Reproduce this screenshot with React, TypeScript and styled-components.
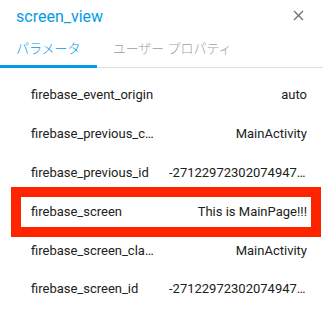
import React from "react";
import styled, { createGlobalStyle } from "styled-components";

const Global = createGlobalStyle`
  html, body { margin: 0; padding: 0; background: #ffffff; }
  body { font-family: Roboto, "Noto Sans CJK JP", sans-serif; -webkit-font-smoothing: antialiased; }
`;

const Panel = styled.div`
  width: 323px;
  height: 324px;
  background: #ffffff;
  overflow: hidden;
  display: flex;
  flex-direction: column;
`;

const Header = styled.div`
  display: flex;
  align-items: center;
  justify-content: space-between;
  height: 34px;
  padding: 0 16px 0 16px;
  box-sizing: border-box;
`;

const Title = styled.div`
  font-family: Roboto, sans-serif;
  font-size: 16px;
  color: #039be5;
  line-height: 34px;
`;

const CloseButton = styled.button`
  border: 0;
  background: none;
  padding: 0;
  width: 17px;
  height: 17px;
  display: flex;
  align-items: center;
  justify-content: center;
  color: #757575;
  cursor: pointer;
  margin-top: -4px;
`;

const Tabs = styled.div`
  display: flex;
  border-bottom: 1px solid #e0e0e0;
  height: 33px;
`;

const Tab = styled.div<{ $active?: boolean }>`
  box-sizing: border-box;
  height: 34px;
  margin-bottom: -1px;
  padding: 0 16px 5px 16px;
  display: flex;
  align-items: center;
  font-family: Roboto, "Noto Sans CJK JP", sans-serif;
  font-size: 13px;
  color: ${(p) => (p.$active ? "#039be5" : "#9e9e9e")};
  border-bottom: 3px solid ${(p) => (p.$active ? "#039be5" : "transparent")};
  font-weight: 300;
`;

const List = styled.div`
  padding-top: 7.6px;
  display: flex;
  flex-direction: column;
`;

const Row = styled.div`
  position: relative;
  height: 38.8px;
  display: grid;
  grid-template-columns: 124px 1fr;
  column-gap: 14px;
  align-items: center;
  padding: 0 16px 0 31px;
  font-family: Roboto, sans-serif;
  font-size: 13px;
  color: #212121;
`;

const Key = styled.div`
  white-space: nowrap;
  overflow: hidden;
  text-overflow: ellipsis;
`;

const Value = styled.div`
  white-space: nowrap;
  overflow: hidden;
  text-overflow: ellipsis;
  text-align: right;
`;

const Highlight = styled.div`
  position: absolute;
  top: -5px;
  bottom: -6.2px;
  left: 11px;
  right: 2px;
  border: 10px solid #ff2400;
  pointer-events: none;
`;

const rows = [
  { k: "firebase_event_origin", v: "auto" },
  { k: "firebase_previous_class", v: "MainActivity" },
  { k: "firebase_previous_id", v: "-2712297230207494712" },
  { k: "firebase_screen", v: "This is MainPage!!!", hl: true },
  { k: "firebase_screen_class", v: "MainActivity" },
  { k: "firebase_screen_id", v: "-2712297230207494712" },
];

export default function App() {
  return (
    <Panel>
      <Global />
      <Header>
        <Title>screen_view</Title>
        <CloseButton aria-label="close">
          <svg width="17" height="17" viewBox="0 0 24 24" fill="currentColor">
            <path d="M19 6.41L17.59 5 12 10.59 6.41 5 5 6.41 10.59 12 5 17.59 6.41 19 12 13.41 17.59 19 19 17.59 13.41 12z" />
          </svg>
        </CloseButton>
      </Header>
      <Tabs>
        <Tab $active>パラメータ</Tab>
        <Tab>ユーザー プロパティ</Tab>
      </Tabs>
      <List>
        {rows.map((r) => (
          <Row key={r.k}>
            <Key>{r.k}</Key>
            <Value>{r.v}</Value>
            {r.hl && <Highlight />}
          </Row>
        ))}
      </List>
    </Panel>
  );
}
